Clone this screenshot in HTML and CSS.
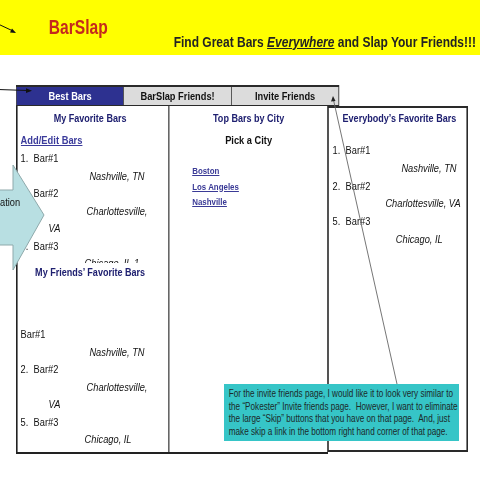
FILE: index.html
```html
<!DOCTYPE html>
<html lang="en">
<head>
<meta charset="utf-8">
<title>BarSlap</title>
<link rel="stylesheet" href="styles.css">
</head>
<body>
<div class="page">
 <div class="sheet">
  <header class="banner">
    <h1 class="logo">BarSlap</h1>
    <p class="tagline">Find Great Bars <em>Everywhere</em> and Slap Your Friends!!!</p>
  </header>

  <nav class="tabs">
    <div class="tab tab--active">Best Bars</div>
    <div class="tab">BarSlap Friends!</div>
    <div class="tab">Invite Friends</div>
  </nav>

  <main class="boards">
    <section class="board">
      <div class="col col--mine">
        <div class="mine">
          <h2 class="col-title">My Favorite Bars</h2>
          <a class="edit-link" href="#">Add/Edit Bars</a>
          <ol class="bars">
            <li><span class="num">1.</span>Bar#1</li>
            <li class="city nash">Nashville, TN</li>
            <li><span class="num">2.</span>Bar#2</li>
            <li class="city cville">Charlottesville, VA</li>
            <li><span class="num">5.</span>Bar#3</li>
            <li class="city chi">Chicago, IL 1</li>
          </ol>
        </div>
        <div class="friends">
          <h2 class="col-title">My Friends’ Favorite Bars</h2>
          <ol class="bars bars--friends">
            <li>Bar#1</li>
            <li class="city nash">Nashville, TN</li>
            <li><span class="num">2.</span>Bar#2</li>
            <li class="city cville">Charlottesville, VA</li>
            <li><span class="num">5.</span>Bar#3</li>
            <li class="city chi">Chicago, IL</li>
          </ol>
        </div>
      </div>
      <div class="col col--city">
        <h2 class="col-title">Top Bars by City<span class="trail"> </span></h2>
        <p class="pick">Pick a City</p>
        <div class="city-links">
          <a href="#">Boston</a>
          <a href="#">Los Angeles</a>
          <a href="#">Nashville</a>
        </div>
      </div>
    </section>

    <section class="everybody">
      <h2 class="col-title">Everybody’s Favorite Bars</h2>
      <ol class="bars">
        <li><span class="num">1.</span>Bar#1</li>
        <li class="city nash">Nashville, TN</li>
        <li><span class="num">2.</span>Bar#2</li>
        <li class="city cville">Charlottesville, VA</li>
        <li><span class="num">5.</span>Bar#3</li>
        <li class="city chi">Chicago, IL</li>
      </ol>
    </section>
  </main>

  <div class="nav-arrow">
    <svg width="62.5" height="115" viewBox="0 0 50 115" preserveAspectRatio="none">
      <polygon points="-2,30 13,30 13,5 44,55 13,110 13,85 -2,85" fill="#b8dfe2" stroke="#8ea9ab" stroke-width="1"/>
    </svg>
    <span class="nav-label">ation</span>
  </div>

  <svg class="annotations" width="600" height="480" viewBox="0 0 480 480" preserveAspectRatio="none">
    <line x1="-2" y1="24" x2="13" y2="31" stroke="#111" stroke-width="1"/>
    <polygon points="16,33 10,32.5 12,28.5" fill="#111"/>
    <line x1="-2" y1="89.5" x2="28" y2="90.5" stroke="#111" stroke-width="1"/>
    <polygon points="32,90.8 26,88.3 26,93" fill="#111"/>
    <line x1="333.5" y1="100" x2="397" y2="384" stroke="#666" stroke-width="0.9"/>
    <polygon points="333,96 331,101.5 335.5,101" fill="#222"/>
  </svg>

  <div class="note">For the invite friends page, I would like it to look very similar to<br>the “Pokester” Invite friends page.&nbsp; However, I want to eliminate<br>the large “Skip” buttons that you have on that page.&nbsp; And, just<br>make skip a link in the bottom right hand corner of that page.</div>
 </div>
</div>
</body>
</html>
```

FILE: styles.css
```css
* { box-sizing: border-box; margin: 0; padding: 0; }

body {
  margin: 0;
  background: #fff;
  font-family: "Liberation Sans", Arial, sans-serif;
  color: #111;
}

.page {
  width: 480px;
  height: 480px;
  overflow: hidden;
}

/* the mock-up is drawn in a condensed face: the whole sheet is narrowed */
.sheet {
  position: relative;
  width: 600px;
  height: 480px;
  transform: scaleX(0.8);
  transform-origin: 0 0;
}

/* banner */
.banner {
  height: 55px;
  background: #ffff00;
  display: flex;
  align-items: flex-start;
}
.logo {
  margin: 16px 0 0 61px;
  font-size: 19.5px;
  line-height: 22px;
  font-weight: bold;
  color: #c42a1d;
}
.tagline {
  margin: 33px 5px 0 auto;
  font-size: 15px;
  line-height: 17px;
  font-weight: bold;
  white-space: nowrap;
  color: #232323;
}
.tagline em { font-style: italic; text-decoration: underline; }

/* tabs */
.tabs {
  display: flex;
  margin: 30px 0 0 20px;
  width: 404px;
  height: 21px;
  border: 1.25px solid #2a2a2a;
  border-top-width: 2px;
  background: #dcdcdc;
}
.tab {
  flex: 1;
  text-align: center;
  font-size: 11.6px;
  font-weight: bold;
  line-height: 18px;
  color: #111;
  border-left: 1.25px solid #3a3a3a;
}
.tab:first-child { border-left: 0; }
.tab--active { background: #2d3190; color: #fff; }

/* boards */
.boards { display: flex; margin-left: 20px; }

.board {
  width: 390px;
  height: 348px;
  display: flex;
  border-left: 2.5px solid #222;
  border-bottom: 2px solid #222;
}
.col--mine { width: 187.5px; padding: 0 10px 0 3.75px; }
.col--city { flex: 1; border-left: 2.5px solid #666; padding-top: 3px; }

.mine { height: 157px; overflow: hidden; padding-top: 3px; }

.col-title {
  font-size: 11.3px;
  line-height: 18px;
  font-weight: bold;
  text-align: center;
  white-space: nowrap;
  color: #1f2070;
}
.trail { text-decoration: underline; }

.edit-link {
  display: block;
  margin-top: 4px;
  font-size: 11.7px;
  line-height: 18px;
  font-weight: bold;
  color: #3b3b9b;
  text-decoration: underline;
}

.bars { list-style: none; font-size: 11.6px; line-height: 17.5px; color: #111; }
.num { display: inline-block; width: 16.25px; }
.city { font-style: italic; margin-left: 35px; }
.col--mine .nash { text-indent: 51px; }
.col--mine .cville { text-indent: 47.5px; }
.col--mine .chi { text-indent: 45px; }

.bars--friends { margin-top: 44px; }

.pick {
  margin-top: 4px;
  font-size: 11.6px;
  line-height: 18px;
  font-weight: bold;
  text-align: center;
  color: #111;
}
.city-links { margin-top: 14px; padding-left: 28.75px; }
.city-links a {
  display: block;
  width: max-content;
  font-size: 9.9px;
  line-height: 15.5px;
  font-weight: bold;
  color: #3a3a96;
  text-decoration: underline;
}

.everybody {
  width: 176px;
  height: 346px;
  margin-left: -1.25px;
  border: 2.5px solid #2a2a2a;
  border-top-width: 2px;
  border-bottom-width: 2px;
  padding: 1px 0 0 5px;
}
.everybody .bars { margin-top: 14px; line-height: 17.8px; }
.everybody .city { margin-left: 0; white-space: nowrap; }
.everybody .nash { text-indent: 86px; }
.everybody .cville { text-indent: 66px; }
.everybody .chi { text-indent: 79px; }

/* overlays */
.nav-arrow {
  position: absolute;
  left: 0;
  top: 160px;
  width: 62.5px;
  height: 115px;
}
.nav-arrow svg { display: block; }
.nav-label {
  position: absolute;
  left: 0;
  top: 35px;
  font-size: 11.6px;
  line-height: 14px;
  color: #111;
}

.annotations { position: absolute; left: 0; top: 0; pointer-events: none; }

.note {
  position: absolute;
  left: 280px;
  top: 384px;
  width: 294px;
  height: 57px;
  padding: 4px 0 0 6px;
  background: #36c5c7;
  font-size: 10.2px;
  line-height: 12.7px;
  white-space: nowrap;
  color: #1c2929;
}
```
